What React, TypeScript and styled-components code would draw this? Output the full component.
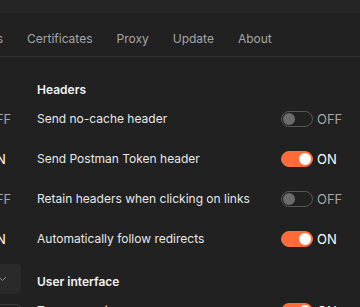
import React from 'react';
import styled, { createGlobalStyle } from 'styled-components';

const GlobalStyle = createGlobalStyle`
  html, body {
    margin: 0;
    padding: 0;
    background: #212121;
  }
  body {
    font-family: Inter, 'Liberation Sans', sans-serif;
    font-size: 12px;
    color: #e6e6e6;
    overflow: hidden;
  }
`;

const Page = styled.div`
  width: 360px;
  height: 307px;
  overflow: hidden;
  background: #212121;
`;

const TopBand = styled.div`
  height: 13px;
  background: #252525;
`;

const TabBar = styled.div`
  display: flex;
  gap: 24px;
  height: 44px;
  box-sizing: border-box;
  border-bottom: 1px solid #333333;
`;

const LeadTabs = styled.div`
  flex: none;
  width: 3px;
  min-width: 0;
  display: flex;
  justify-content: flex-end;
  gap: 24px;
`;

const Tab = styled.div`
  flex: none;
  padding: 16px 0 7px;
  line-height: 20px;
  color: #a6a6a6;
  white-space: nowrap;
`;

const Columns = styled.div`
  display: flex;
  gap: 16px;
  margin-left: -294px;
  padding-top: 24px;
`;

const Column = styled.div`
  flex: 0 0 315px;
  display: flex;
  flex-direction: column;
`;

const Heading = styled.div<{ $spaced?: boolean }>`
  font-weight: 600;
  line-height: 18px;
  color: #f2f2f2;
  margin-top: ${(p) => (p.$spaced ? '14px' : '0')};
`;

const Row = styled.div`
  display: grid;
  grid-template-columns: 1fr 71px;
  align-items: center;
  height: 40px;
`;

const Label = styled.div`
  color: #e8e8e8;
  white-space: nowrap;
  line-height: 18px;
`;

const Control = styled.div`
  display: flex;
  align-items: center;
  gap: 4px;
`;

const Track = styled.div<{ $on: boolean }>`
  width: 32px;
  height: 16px;
  box-sizing: border-box;
  border-radius: 8px;
  border: 1px solid ${(p) => (p.$on ? '#ff6c37' : '#555555')};
  background: ${(p) => (p.$on ? '#ff6c37' : 'transparent')};
  display: flex;
  align-items: center;
  justify-content: ${(p) => (p.$on ? 'flex-end' : 'flex-start')};
  padding: 0 1px;
`;

const Knob = styled.div<{ $on: boolean }>`
  width: 12px;
  height: 12px;
  border-radius: 50%;
  background: ${(p) => (p.$on ? '#ffffff' : '#6b6b6b')};
`;

const State = styled.span<{ $on: boolean }>`
  font-size: 13px;
  color: ${(p) => (p.$on ? '#ffffff' : '#a6a6a6')};
  line-height: 18px;
`;

const SelectRow = styled.div`
  display: flex;
  justify-content: space-between;
  align-items: center;
  height: 40px;
`;

const Select = styled.div<{ $outlined?: boolean }>`
  width: 120px;
  height: 30px;
  box-sizing: border-box;
  border-radius: 4px;
  background: ${(p) => (p.$outlined ? 'transparent' : '#2a2a2a')};
  border: 1px solid ${(p) => (p.$outlined ? '#3a3a3a' : '#2a2a2a')};
  display: flex;
  align-items: center;
  justify-content: flex-end;
  padding-right: 13px;
  color: #8c8c8c;
`;

const Toggle: React.FC<{ on: boolean }> = ({ on }) => (
  <Control>
    <Track $on={on}>
      <Knob $on={on} />
    </Track>
    <State $on={on}>{on ? 'ON' : 'OFF'}</State>
  </Control>
);

const Chevron = () => (
  <svg width="9" height="6" viewBox="0 0 9 6" fill="none">
    <path d="M1 1l3.5 3.5L8 1" stroke="#8c8c8c" strokeWidth="1" />
  </svg>
);

const leftRows = [
  { label: 'SSL certificate verification', on: false },
  { label: 'Always open requests in new tab', on: true },
  { label: 'Always ask when closing unsaved tabs', on: false },
  { label: 'Language detection', on: true },
];

const headerRows = [
  { label: 'Send no-cache header', on: false },
  { label: 'Send Postman Token header', on: true },
  { label: 'Retain headers when clicking on links', on: false },
  { label: 'Automatically follow redirects', on: true },
];

export default function App() {
  return (
    <Page>
      <GlobalStyle />
      <TopBand />
      <TabBar>
        <LeadTabs>
          <Tab>Data</Tab>
          <Tab>Add-ons</Tab>
        </LeadTabs>
        <Tab>Certificates</Tab>
        <Tab>Proxy</Tab>
        <Tab>Update</Tab>
        <Tab>About</Tab>
      </TabBar>
      <Columns>
        <Column>
          <Heading>Request</Heading>
          {leftRows.map((r) => (
            <Row key={r.label}>
              <Label>{r.label}</Label>
              <Toggle on={r.on} />
            </Row>
          ))}
          <SelectRow>
            <Label>Request timeout</Label>
            <Select>
              <Chevron />
            </Select>
          </SelectRow>
          <SelectRow>
            <Label>Max response size</Label>
            <Select $outlined />
          </SelectRow>
        </Column>
        <Column>
          <Heading>Headers</Heading>
          {headerRows.map((r) => (
            <Row key={r.label}>
              <Label>{r.label}</Label>
              <Toggle on={r.on} />
            </Row>
          ))}
          <Heading $spaced>User interface</Heading>
          <Row>
            <Label>Two-pane view</Label>
            <Toggle on />
          </Row>
        </Column>
      </Columns>
    </Page>
  );
}
